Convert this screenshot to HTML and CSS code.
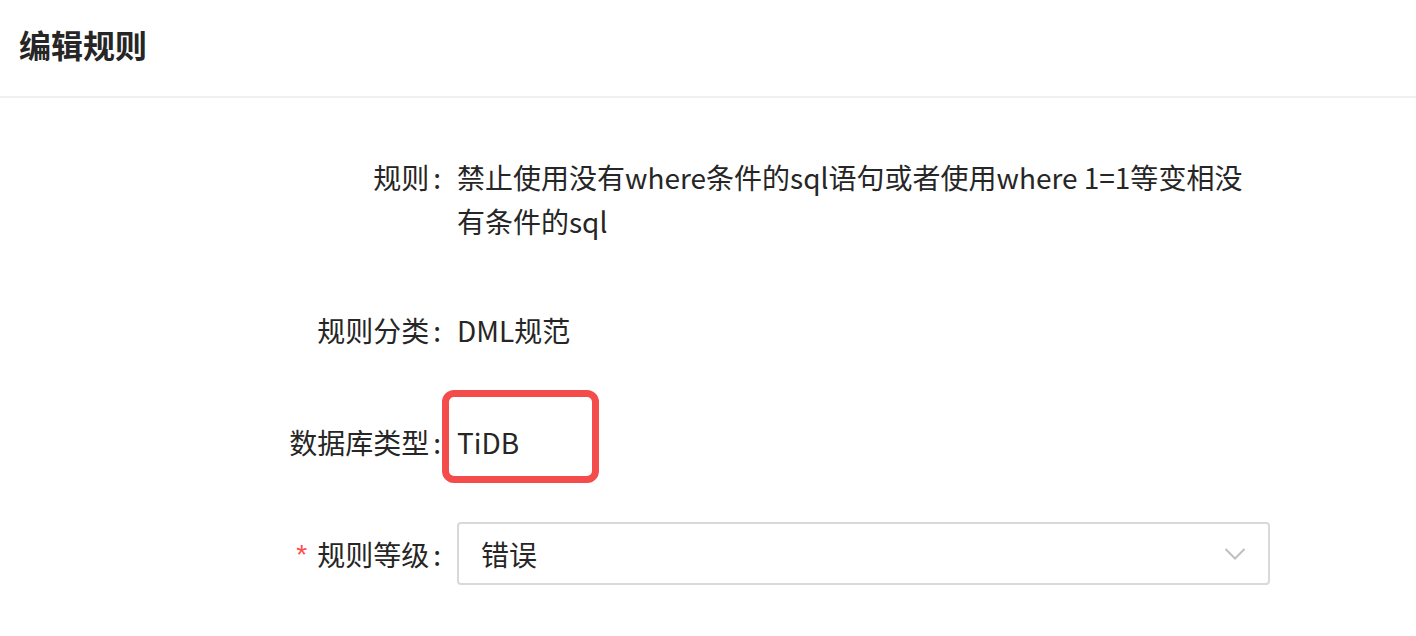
FILE: index.html
```html
<!DOCTYPE html>
<html lang="zh-CN">
<head>
<meta charset="utf-8">
<title>编辑规则</title>
<link rel="stylesheet" href="styles.css">
</head>
<body>
<div class="modal">
  <div class="modal-header">
    <div class="modal-title">编辑规则</div>
  </div>
  <div class="modal-body">
    <form class="form">
      <div class="form-item form-item-multi">
        <div class="form-label"><label>规则</label></div>
        <div class="form-control"><div class="form-text multi">禁止使用没有where条件的sql语句或者使用where 1=1等变相没有条件的sql</div></div>
      </div>
      <div class="form-item">
        <div class="form-label"><label>规则分类</label></div>
        <div class="form-control"><div class="form-text">DML规范</div></div>
      </div>
      <div class="form-item highlighted">
        <div class="form-label"><label>数据库类型</label></div>
        <div class="form-control"><div class="form-text">TiDB</div></div>
        <div class="annotation"></div>
      </div>
      <div class="form-item">
        <div class="form-label"><label class="required">规则等级</label></div>
        <div class="form-control">
          <div class="select">
            <span class="select-value">错误</span>
            <svg class="select-arrow" width="22" height="14" viewBox="0 0 22 14"><path d="M1.5 2 L11 11.5 L20.5 2" fill="none" stroke="#bfbfbf" stroke-width="2"/></svg>
          </div>
        </div>
      </div>
    </form>
  </div>
</div>
</body>
</html>
```
FILE: styles.css
```css
html, body {
  margin: 0;
  padding: 0;
  background: #ffffff;
}
body {
  font-family: "Noto Sans CJK SC", "Noto Sans", sans-serif;
  color: #262626;
  width: 1416px;
  height: 636px;
  overflow: hidden;
}
.modal {
  position: relative;
}
.modal-header {
  height: 96px;
  padding: 0 19px;
  border-bottom: 2px solid #f0f0f0;
  display: flex;
  align-items: center;
}
.modal-title {
  font-size: 32px;
  font-weight: 700;
  line-height: 44px;
  color: #262626;
  margin-top: -8px;
}
.modal-body {
  padding: 47px 0 0 0;
}
.form-item {
  display: grid;
  grid-template-columns: 457px 813px;
  min-height: 64px;
  margin-bottom: 48px;
  position: relative;
}
.form-label {
  text-align: right;
  height: 64px;
  line-height: 64px;
  font-size: 28px;
  white-space: nowrap;
}
.form-label label::after {
  content: ":";
  margin: 0 16px 0 4px;
}
.required::before {
  content: "*";
  color: #ff4d4f;
  font-family: "Liberation Sans", sans-serif;
  font-size: 28px;
  margin-right: 10px;
  position: relative;
  top: -2px;
}
.form-text {
  font-size: 28px;
  line-height: 64px;
}
.form-text.multi {
  line-height: 44px;
  padding: 10px 0 7px;
}
.annotation {
  position: absolute;
  left: 442px;
  top: -20px;
  width: 143px;
  height: 79px;
  border: 7px solid #f44b4b;
  border-radius: 12px;
  pointer-events: none;
}
.select {
  box-sizing: border-box;
  height: 63px;
  border: 2px solid #d9d9d9;
  border-radius: 4px;
  display: flex;
  align-items: center;
  justify-content: space-between;
  padding: 0 22px 0 22px;
  font-size: 28px;
}
.select-value {
  line-height: 44px;
}
.select-arrow {
  display: block;
}
```
